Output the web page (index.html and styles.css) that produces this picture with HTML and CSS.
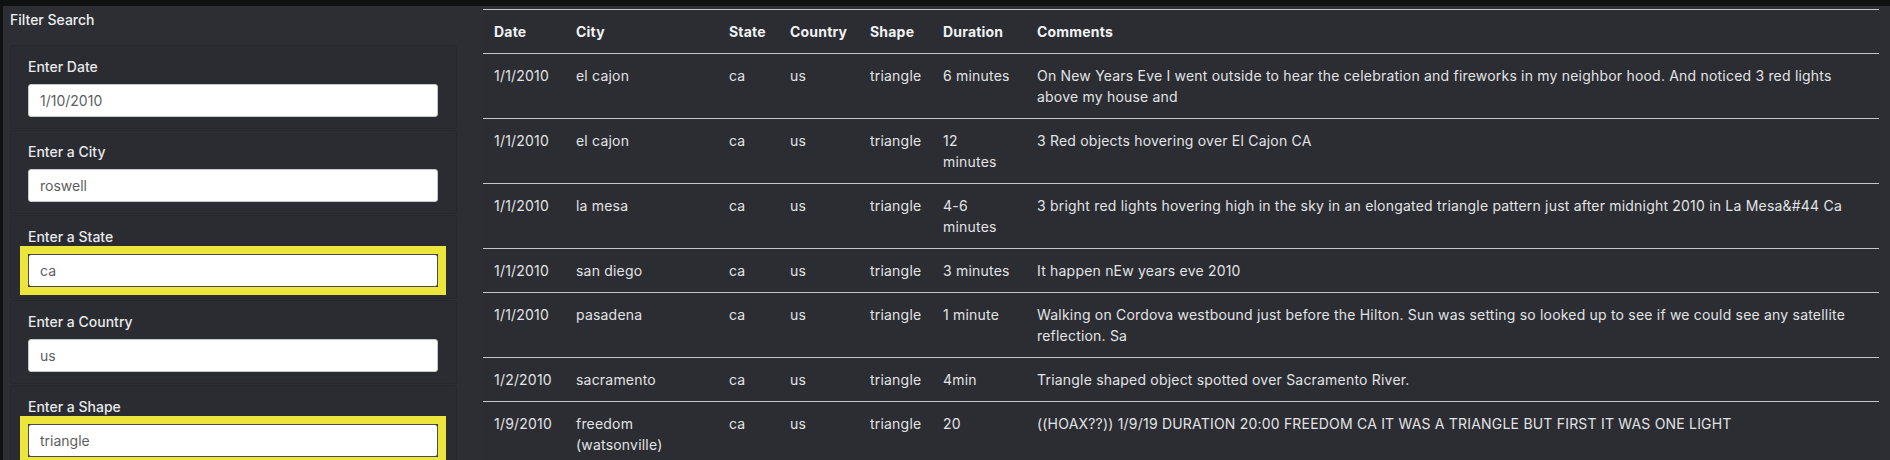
FILE: index.html
```html
<!DOCTYPE html>
<html lang="en">
<head>
<meta charset="utf-8">
<title>UFO Sightings</title>
<link rel="stylesheet" href="styles.css">
</head>
<body>
<div class="page">
  <aside class="sidebar">
    <h2 class="sidebar-title">Filter Search</h2>
    <ul class="filters">
      <li class="filter">
        <label class="filter-label" for="datetime">Enter Date</label>
        <div class="field"><input class="filter-input" id="datetime" type="text" value="1/10/2010"></div>
      </li>
      <li class="filter">
        <label class="filter-label" for="city">Enter a City</label>
        <div class="field"><input class="filter-input" id="city" type="text" value="roswell"></div>
      </li>
      <li class="filter">
        <label class="filter-label" for="state">Enter a State</label>
        <div class="field is-active"><input class="filter-input" id="state" type="text" value="ca"></div>
      </li>
      <li class="filter">
        <label class="filter-label" for="country">Enter a Country</label>
        <div class="field"><input class="filter-input" id="country" type="text" value="us"></div>
      </li>
      <li class="filter">
        <label class="filter-label" for="shape">Enter a Shape</label>
        <div class="field is-active"><input class="filter-input" id="shape" type="text" value="triangle"></div>
      </li>
    </ul>
  </aside>
  <main class="content">
    <table class="ufo-table">
      <colgroup>
        <col class="c-date">
        <col class="c-city">
        <col class="c-state">
        <col class="c-country">
        <col class="c-shape">
        <col class="c-duration">
        <col class="c-comments">
      </colgroup>
      <thead>
        <tr>
          <th>Date</th>
          <th>City</th>
          <th>State</th>
          <th>Country</th>
          <th>Shape</th>
          <th>Duration</th>
          <th class="comments">Comments</th>
        </tr>
      </thead>
      <tbody>
        <tr>
          <td>1/1/2010</td><td>el cajon</td><td>ca</td><td>us</td><td>triangle</td>
          <td class="duration">6 minutes</td>
          <td class="comments">On New Years Eve I went outside to hear the celebration and fireworks in my neighbor hood. And noticed 3 red lights above my house and</td>
        </tr>
        <tr>
          <td>1/1/2010</td><td>el cajon</td><td>ca</td><td>us</td><td>triangle</td>
          <td class="duration">12 minutes</td>
          <td class="comments">3 Red objects hovering over El Cajon CA</td>
        </tr>
        <tr>
          <td>1/1/2010</td><td>la mesa</td><td>ca</td><td>us</td><td>triangle</td>
          <td class="duration">4-6 minutes</td>
          <td class="comments">3 bright red lights hovering high in the sky in an elongated triangle pattern just after midnight 2010 in La Mesa&amp;#44 Ca</td>
        </tr>
        <tr>
          <td>1/1/2010</td><td>san diego</td><td>ca</td><td>us</td><td>triangle</td>
          <td class="duration">3 minutes</td>
          <td class="comments">It happen nEw years eve 2010</td>
        </tr>
        <tr>
          <td>1/1/2010</td><td>pasadena</td><td>ca</td><td>us</td><td>triangle</td>
          <td class="duration">1 minute</td>
          <td class="comments">Walking on Cordova westbound just before the Hilton. Sun was setting so looked up to see if we could see any satellite reflection. Sa</td>
        </tr>
        <tr>
          <td>1/2/2010</td><td>sacramento</td><td>ca</td><td>us</td><td>triangle</td>
          <td class="duration">4min</td>
          <td class="comments">Triangle shaped object spotted over Sacramento River.</td>
        </tr>
        <tr>
          <td>1/9/2010</td><td>freedom (watsonville)</td><td>ca</td><td>us</td><td>triangle</td>
          <td class="duration">20</td>
          <td class="comments">((HOAX??)) 1/9/19 DURATION 20:00 FREEDOM CA IT WAS A TRIANGLE BUT FIRST IT WAS ONE LIGHT</td>
        </tr>
      </tbody>
    </table>
  </main>
</div>
</body>
</html>
```

FILE: styles.css
```css
html, body {
  margin: 0;
  padding: 0;
  height: 100%;
  overflow: hidden;
}

body {
  background: #0f1012;
  font-family: Inter, "Liberation Sans", Arial, sans-serif;
  font-size: 14px;
  color: #e4e5e7;
}

.page {
  display: flex;
  margin: 6px 0 0 3px;
  height: calc(100% - 6px);
  background: #2c2e33;
}

/* ---------- Sidebar ---------- */
.sidebar {
  flex: 0 0 454px;
  padding: 4px 0 0 7px;
  box-sizing: border-box;
}

.sidebar-title {
  margin: 0 0 15px;
  font-size: 14px;
  line-height: 20px;
  font-weight: 500;
  color: #eceef0;
}

.filters {
  list-style: none;
  margin: 0;
  padding: 0;
  width: 447px;
}

.filter {
  display: flex;
  flex-direction: column;
  padding: 11px 18px 11px 17px;
  margin-bottom: 1px;
  background: #2a2c31;
  border: 1px solid #26282c;
  border-radius: 3px;
}

.filter-label {
  font-size: 14px;
  line-height: 20px;
  font-weight: 500;
  margin-bottom: 7px;
  color: #e8e9eb;
}

.field {
  width: 410px;
  height: 33px;
}

.field.is-active {
  outline: 8px solid #ece53b;
}

.filter-input {
  display: block;
  box-sizing: border-box;
  width: 100%;
  height: 100%;
  margin: 0;
  padding: 0 11px;
  font-family: inherit;
  font-size: 14px;
  color: #5d5e60;
  background: #ffffff;
  border: 1px solid #c7c8ca;
  border-radius: 3px;
}

.field.is-active .filter-input {
  border-color: #4a4b4d;
}

/* ---------- Table ---------- */
.content {
  flex: 1 1 auto;
  padding: 3px 11px 0 26px;
  min-width: 0;
}

.ufo-table {
  width: 1396px;
  table-layout: fixed;
  border-collapse: collapse;
  border-top: 1px solid #c4c6c9;
  background: #2b2d32;
  letter-spacing: 0.2px;
}

.c-date { width: 82px; }
.c-city { width: 153px; }
.c-state { width: 61px; }
.c-country { width: 80px; }
.c-shape { width: 73px; }
.c-duration { width: 94px; }
.c-comments { width: 853px; }

.ufo-table th,
.ufo-table td {
  padding: 11px;
  line-height: 21px;
  text-align: left;
  vertical-align: top;
  border-top: 1px solid #c4c6c9;
}

.ufo-table th {
  font-weight: 700;
  color: #f1f2f4;
}

.ufo-table td {
  color: #e2e3e5;
}

.ufo-table td.duration {
  padding-right: 15px;
}

.ufo-table .comments {
  padding-right: 20px;
}
```
